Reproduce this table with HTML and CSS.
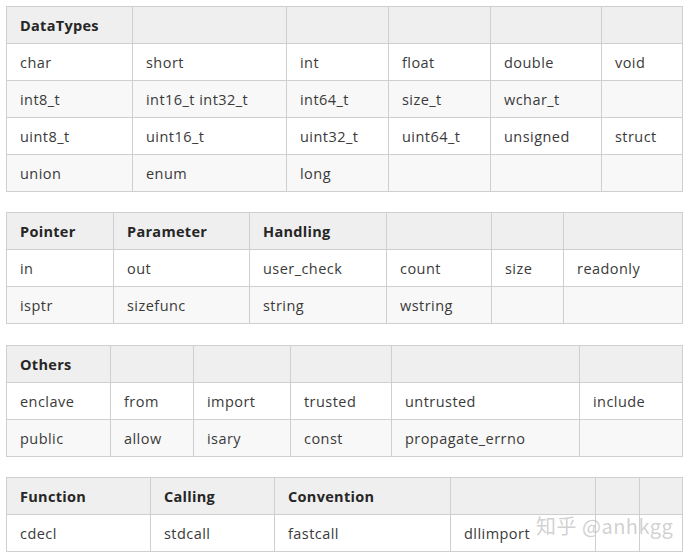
FILE: index.html
```html
<!DOCTYPE html>
<html>
<head>
<meta charset="utf-8">
<link rel="stylesheet" href="styles.css">
</head>
<body>
<div class="page">
  <table class="grid t1">
    <colgroup><col style="width:126px"><col style="width:154px"><col style="width:102px"><col style="width:102px"><col style="width:111px"><col></colgroup>
    <thead><tr><th>DataTypes</th><th></th><th></th><th></th><th></th><th></th></tr></thead>
    <tbody>
      <tr><td>char</td><td>short</td><td>int</td><td>float</td><td>double</td><td>void</td></tr>
      <tr><td>int8_t</td><td>int16_t int32_t</td><td>int64_t</td><td>size_t</td><td>wchar_t</td><td></td></tr>
      <tr><td>uint8_t</td><td>uint16_t</td><td>uint32_t</td><td>uint64_t</td><td>unsigned</td><td>struct</td></tr>
      <tr><td>union</td><td>enum</td><td>long</td><td></td><td></td><td></td></tr>
    </tbody>
  </table>

  <table class="grid t2">
    <colgroup><col style="width:107px"><col style="width:136px"><col style="width:137px"><col style="width:105px"><col style="width:72px"><col></colgroup>
    <thead><tr><th>Pointer</th><th>Parameter</th><th>Handling</th><th></th><th></th><th></th></tr></thead>
    <tbody>
      <tr><td>in</td><td>out</td><td>user_check</td><td>count</td><td>size</td><td>readonly</td></tr>
      <tr><td>isptr</td><td>sizefunc</td><td>string</td><td>wstring</td><td></td><td></td></tr>
    </tbody>
  </table>

  <table class="grid t3">
    <colgroup><col style="width:104px"><col style="width:83px"><col style="width:97px"><col style="width:101px"><col style="width:188px"><col></colgroup>
    <thead><tr><th>Others</th><th></th><th></th><th></th><th></th><th></th></tr></thead>
    <tbody>
      <tr><td>enclave</td><td>from</td><td>import</td><td>trusted</td><td>untrusted</td><td>include</td></tr>
      <tr><td>public</td><td>allow</td><td>isary</td><td>const</td><td>propagate_errno</td><td></td></tr>
    </tbody>
  </table>

  <div class="wrap-last">
    <table class="grid t4">
      <colgroup><col style="width:144px"><col style="width:124px"><col style="width:176px"><col style="width:145px"><col style="width:44px"><col></colgroup>
      <thead><tr><th>Function</th><th>Calling</th><th>Convention</th><th></th><th></th><th></th></tr></thead>
      <tbody>
        <tr><td>cdecl</td><td>stdcall</td><td>fastcall</td><td>dllimport</td><td></td><td></td></tr>
      </tbody>
    </table>
    <div class="watermark">知乎 @anhkgg</div>
  </div>
</div>
</body>
</html>
```

FILE: styles.css
```css
html, body {
  margin: 0;
  padding: 0;
  background: #ffffff;
}
.page {
  padding: 6px 0 0 6px;
  display: flex;
  flex-direction: column;
  gap: 20px;
  width: 677px;
}
.t3 {
  margin-top: 1px;
}
.grid {
  border-collapse: collapse;
  table-layout: fixed;
  width: 677px;
  font-family: "Open Sans", "Noto Sans", "Noto Sans CJK SC", sans-serif;
  font-size: 14.5px;
  color: #3a3a3a;
}
.grid th,
.grid td {
  border: 1px solid #cfcfcf;
  height: 37px;
  padding: 0 0 0 13px;
  text-align: left;
  vertical-align: middle;
  white-space: nowrap;
  overflow: hidden;
  box-sizing: border-box;
  letter-spacing: 0.45px;
}
.grid th {
  background: #efefef;
  font-weight: 700;
  color: #262626;
  letter-spacing: 0.3px;
}
.grid tbody tr:nth-child(odd) td {
  background: #ffffff;
}
.grid tbody tr:nth-child(even) td {
  background: #f8f8f8;
}
.wrap-last {
  position: relative;
}
.watermark {
  position: absolute;
  left: 530px;
  top: 34px;
  font-family: "Noto Sans CJK SC", "Open Sans", sans-serif;
  font-size: 20px;
  color: rgba(170, 170, 170, 0.55);
  white-space: nowrap;
  letter-spacing: 0.5px;
}
```
